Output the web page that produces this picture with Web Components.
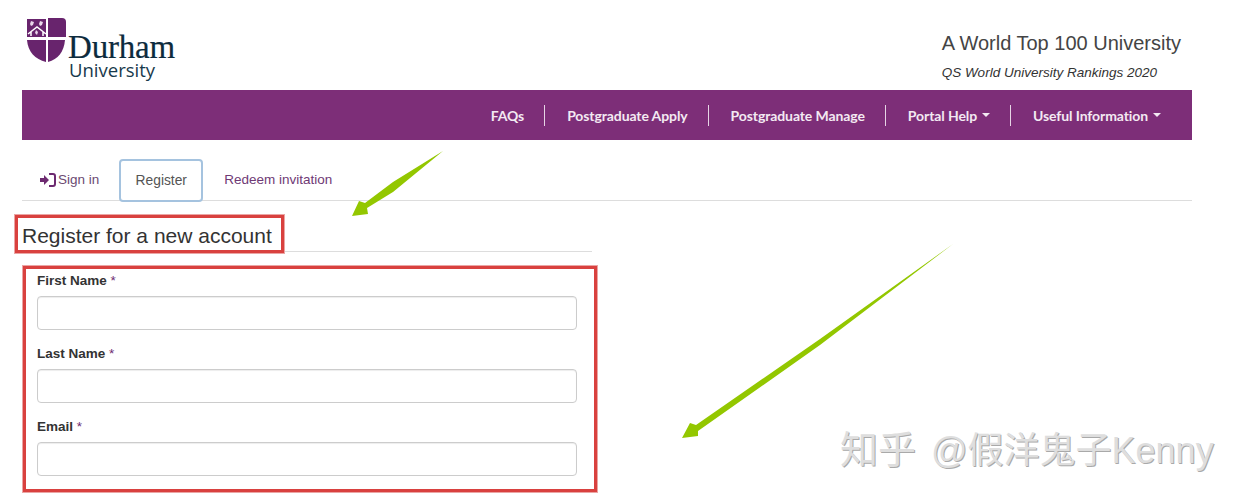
<!DOCTYPE html>
<html lang="en">
<head>
<meta charset="utf-8">
<title>Durham University - Register</title>
<style>
    html, body { margin: 0; padding: 0; background: #fff; overflow: hidden; }
    body { font-family: "Liberation Sans", Arial, sans-serif; font-size: 14px; color: #333; height: 504px; position: relative; }
    #page { width: 1170px; margin-left: 22px; }
</style>
</head>
<body>
<div id="page">
    <du-header></du-header>
    <du-nav>
        <du-nav-item>FAQs</du-nav-item>
        <du-nav-item>Postgraduate Apply</du-nav-item>
        <du-nav-item>Postgraduate Manage</du-nav-item>
        <du-nav-item caret>Portal Help</du-nav-item>
        <du-nav-item caret last>Useful Information</du-nav-item>
    </du-nav>
    <du-tabs></du-tabs>
    <du-heading>Register for a new account</du-heading>
    <du-form>
        <du-field label="First Name"></du-field>
        <du-field label="Last Name"></du-field>
        <du-field label="Email"></du-field>
    </du-form>
</div>
<du-arrow points="443,151 393,182 365,203 359,201 352,216 368,214 367,208 393,192"></du-arrow>
<du-arrow points="953,244 820,339 696,425 690,423 682,438 698,436 698,431 820,345"></du-arrow>
<du-watermark></du-watermark>
<script>
class DuHeader extends HTMLElement {
    connectedCallback(){
        this.attachShadow({mode:'open'}).innerHTML = `<style>
            :host { display: flex; height: 90px; justify-content: space-between; }
            #logo { display: flex; padding: 18px 0 0 5px; }
            svg { display: block; width: 39px; height: 45px; }
            #words { display: flex; flex-direction: column; margin-left: 2px; padding-top: 14px; color: #0d2b3d; }
            #durham { font: 33px/30px "Liberation Serif", serif; letter-spacing: -.2px; -webkit-text-stroke: .2px #0d2b3d; }
            #uni { font: 18.5px/16px "Open Sans", sans-serif; margin-left: 1px; color: #17394c; }
            #rank { padding: 31px 11px 0 0; color: #444; }
            #top { font: 20px/24px "Liberation Sans", sans-serif; }
            #qs { font: italic 13.5px/20px "Liberation Sans", sans-serif; margin-top: 8px; color: #333; }
        </style>
        <div id="logo">
            <svg viewBox="0 0 39 45">
                <path fill="#68246d" d="M0 1h19v18H0z"/>
                <path fill="#68246d" d="M21 0h14q4 0 4 4v15H21z"/>
                <path fill="#68246d" d="M0 22h19v22C8 41 1 34 0 22z"/>
                <path fill="#68246d" d="M21 22h17c-1 12-7 19-17 22z"/>
                <path fill="none" stroke="#fff" stroke-width="1.5" d="M1 16l9-7 9 7M4 18v-4M16 18v-4"/>
                <path fill="#e9d6ea" d="M4 3l3 1-1 3-2 1-1-2zM13 3l3 1-1 3-2 1-1-2zM9 12l2 2-1 3-2-2z"/>
            </svg>
            <div id="words">
                <div id="durham">Durham</div>
                <div id="uni">University</div>
            </div>
        </div>
        <div id="rank">
            <div id="top">A World Top 100 University</div>
            <div id="qs">QS World University Rankings 2020</div>
        </div>`
    }
}
customElements.define('du-header', DuHeader)

class DuNav extends HTMLElement {
    connectedCallback(){
        this.attachShadow({mode:'open'}).innerHTML = `<style>
            :host { display: flex; height: 50px; align-items: center; justify-content: flex-end; background: #7d2e78; padding-right: 11px; }
        </style><slot></slot>`
    }
}
customElements.define('du-nav', DuNav)

class DuNavItem extends HTMLElement {
    connectedCallback(){
        const caret = this.hasAttribute('caret') ? '<span id="caret"></span>' : ''
        this.attachShadow({mode:'open'}).innerHTML = `<style>
            :host { display: flex; align-items: center; height: 21px; padding: 0 20px 0 22px; border-right: 1px solid #e6d5e5; color: #f3e9f2; font: 14px/21px Lato, sans-serif; font-weight: 700; letter-spacing: -.1px; white-space: nowrap; }
            :host([last]) { border-right: none; }
            #caret { width: 0; height: 0; margin-left: 5px; border-top: 4px solid #f3e9f2; border-left: 4px solid transparent; border-right: 4px solid transparent; }
        </style><slot></slot>${caret}`
    }
}
customElements.define('du-nav-item', DuNavItem)

class DuTabs extends HTMLElement {
    connectedCallback(){
        this.attachShadow({mode:'open'}).innerHTML = `<style>
            :host { display: flex; padding-top: 19px; gap: 4px; height: 41px; border-bottom: 1px solid #ddd; font: 13.5px/20px "Liberation Sans", sans-serif; }
            .tab { display: flex; align-items: center; padding: 0 17px; color: #6f3a75; }
            #sign { padding: 0 16px 0 18px; color: #6b4a72; }
            #sign svg { width: 16px; height: 14px; margin-right: 2px; }
            #reg { box-sizing: border-box; width: 84px; height: 43px; justify-content: center; padding: 0; color: #555; font-size: 13.8px; background: #fff; border: 2px solid #a5c3df; border-radius: 4px; }
        </style>
        <div class="tab" id="sign">
            <svg viewBox="0 0 16 14"><path fill="#6d2a70" d="M0 5h4V2l5 5-5 5V9H0zM9 0h4q3 0 3 3v8q0 3-3 3H9v-2h4q1 0 1-1V3q0-1-1-1H9z"/></svg>Sign in
        </div>
        <div class="tab" id="reg">Register</div>
        <div class="tab">Redeem invitation</div>`
    }
}
customElements.define('du-tabs', DuTabs)

class DuHeading extends HTMLElement {
    connectedCallback(){
        this.attachShadow({mode:'open'}).innerHTML = `<style>
            :host { display: block; width: 570px; height: 50px; border-bottom: 1px solid #ddd; position: relative; }
            h2 { margin: 0; padding-top: 23px; font: 21px/24px "Liberation Sans", sans-serif; color: #333; }
            #mark { position: absolute; left: -7px; top: 14px; width: 269px; height: 38px; box-sizing: border-box; border: 3px solid #d9413f; box-shadow: 0 0 0 1px #eba5a4; }
        </style>
        <h2><slot></slot></h2><div id="mark"></div>`
    }
}
customElements.define('du-heading', DuHeading)

class DuForm extends HTMLElement {
    connectedCallback(){
        this.attachShadow({mode:'open'}).innerHTML = `<style>
            :host { display: flex; flex-direction: column; gap: 14px; width: 574px; box-sizing: border-box; margin: 14px 0 0 1px; padding: 2px 17px 13px 11px; border: 3px solid #d9413f; box-shadow: 0 0 0 1px #eba5a4; }
        </style><slot></slot>`
    }
}
customElements.define('du-form', DuForm)

class DuField extends HTMLElement {
    connectedCallback(){
        this.attachShadow({mode:'open'}).innerHTML = `<style>
            :host { display: block; }
            label { display: block; margin: 0 0 5px; font: bold 13.5px/20px "Liberation Sans", sans-serif; color: #333; }
            i { font-style: normal; font-weight: 400; color: #6d2a70; }
            input { display: block; box-sizing: border-box; width: 100%; height: 34px; padding: 6px 12px; border: 1px solid #ccc; border-radius: 4px; background: #fff; box-shadow: inset 0 1px 1px rgba(0,0,0,.075); }
        </style>
        <label>${this.getAttribute('label')} <i>*</i></label>
        <input type="text">`
    }
}
customElements.define('du-field', DuField)

class DuArrow extends HTMLElement {
    connectedCallback(){
        this.attachShadow({mode:'open'}).innerHTML = `<style>
            :host { position: absolute; left: 0; top: 0; width: 1246px; height: 504px; pointer-events: none; }
            svg { display: block; }
        </style>
        <svg width="1246" height="504"><polygon fill="#93c700" points="${this.getAttribute('points')}"/></svg>`
    }
}
customElements.define('du-arrow', DuArrow)

class DuWatermark extends HTMLElement {
    connectedCallback(){
        this.attachShadow({mode:'open'}).innerHTML = `<style>
            :host { position: absolute; left: 840px; top: 428px; white-space: nowrap; color: #dedede; text-shadow: 1px 1px 0 #a9a9a9; font: 36px/44px "Liberation Sans", "Noto Sans CJK SC", sans-serif; }
            #zh { font-size: 38px; margin-right: 15px; }
        </style>
        <span id="zh">知乎</span><span>@假洋鬼子Kenny</span>`
    }
}
customElements.define('du-watermark', DuWatermark)
</script>
</body>
</html>
